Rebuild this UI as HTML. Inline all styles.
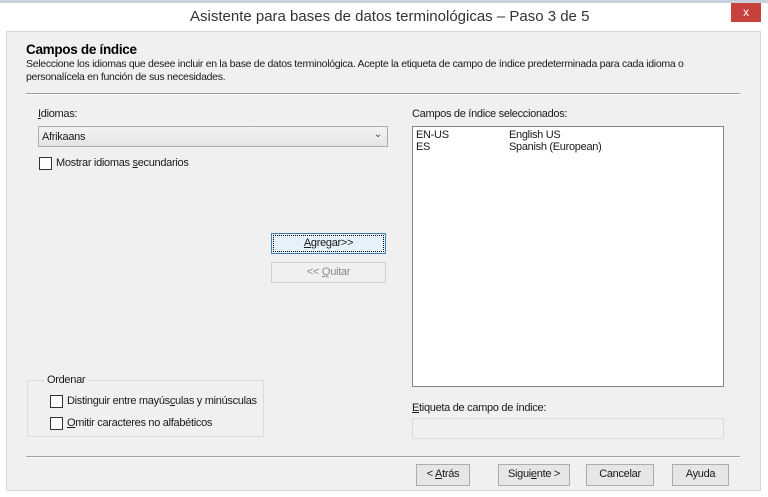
<!DOCTYPE html>
<html><head><meta charset="utf-8"><style>
*{box-sizing:border-box;margin:0;padding:0}
body{width:768px;height:497px;background:#fff;font-family:"Liberation Sans",sans-serif;font-size:11px;color:#1a1a1a;position:relative;overflow:hidden;letter-spacing:-0.3px}
.a{position:absolute;white-space:nowrap}
.top{left:0;top:0;width:768px;height:3px;background:#c9d2dc}
.panel{left:6px;top:31px;width:755px;height:460px;background:#f0f0f0;border:1px solid #d8d8d8}
.btn{position:absolute;background:#e6e6e6;border:1px solid #adadad;text-align:center;line-height:19px;font-size:11px}
.cb{position:absolute;width:13px;height:13px;border:1px solid #333;background:#fff}
.sep{position:absolute;height:2px;border-top:1px solid #a0a0a0;border-bottom:1px solid #fff}
u{text-decoration:underline}
</style></head><body>
<div class="a top"></div>
<div class="a" style="left:0;top:3px;width:768px;height:28px;background:#fff"></div>
<div class="a" style="left:190px;top:8px;font-size:15px;color:#333;letter-spacing:0">Asistente para bases de datos terminológicas – Paso 3 de 5</div>
<div class="a" style="left:731px;top:3px;width:30px;height:19px;background:#c7423c;color:#fff;text-align:center;font-size:12px;line-height:18px">x</div>
<div class="a panel"></div>
<div class="a" style="left:26px;top:42px;font-size:13.5px;font-weight:bold;color:#000">Campos de índice</div>
<div class="a" style="left:26px;top:58px;font-size:10.5px;line-height:13px">Seleccione los idiomas que desee incluir en la base de datos terminológica. Acepte la etiqueta de campo de índice predeterminada para cada idioma o<br>personalícela en función de sus necesidades.</div>
<div class="sep" style="left:26px;top:93px;width:714px"></div>
<div class="a" style="left:38px;top:108px"><u>I</u>diomas:</div>
<div class="a" style="left:38px;top:126px;width:350px;height:21px;border:1px solid #acacac;background:linear-gradient(#f2f2f2,#e5e5e5);padding:4px 3px">Afrikaans<span style="position:absolute;right:5px;top:2px;font-size:10px;color:#444">&#8964;</span></div>
<div class="cb" style="left:39px;top:157px"></div>
<div class="a" style="left:56px;top:157px">Mostrar idiomas <u>s</u>ecundarios</div>
<div class="btn" style="left:271px;top:233px;width:115px;height:21px;border-color:#3c7fb1;background:#e5f1fb;outline:1px dotted #000;outline-offset:-3px"><u>A</u>gregar&gt;&gt;</div>
<div class="btn" style="left:271px;top:262px;width:115px;height:21px;border-color:#cfcfcf;background:#f0f0f0;color:#8a8a8a">&lt;&lt; <u>Q</u>uitar</div>
<div class="a" style="left:412px;top:108px">Campos de índice seleccionados:</div>
<div class="a" style="left:412px;top:126px;width:312px;height:261px;background:#fff;border:1px solid #828790"></div>
<div class="a" style="left:416px;top:129px;line-height:12px">EN-US<br>ES</div>
<div class="a" style="left:509px;top:129px;line-height:12px">English US<br>Spanish (European)</div>
<div class="a" style="left:27px;top:380px;width:237px;height:57px;border:1px solid #dcdcdc"></div>
<div class="a" style="left:44px;top:374px;background:#f0f0f0;padding:0 3px">Ordenar</div>
<div class="cb" style="left:50px;top:395px"></div>
<div class="a" style="left:67px;top:395px">Distinguir entre mayús<u>c</u>ulas y minúsculas</div>
<div class="cb" style="left:50px;top:417px"></div>
<div class="a" style="left:67px;top:417px"><u>O</u>mitir caracteres no alfabéticos</div>
<div class="a" style="left:412px;top:402px"><u>E</u>tiqueta de campo de índice:</div>
<div class="a" style="left:412px;top:418px;width:312px;height:21px;border:1px solid #dadada;background:#f0f0f0"></div>
<div class="sep" style="left:26px;top:456px;width:714px"></div>
<div class="btn" style="left:416px;top:464px;width:54px;height:22px">&lt; <u>A</u>trás</div>
<div class="btn" style="left:498px;top:464px;width:72px;height:22px">Sigui<u>e</u>nte &gt;</div>
<div class="btn" style="left:586px;top:464px;width:68px;height:22px">Cancelar</div>
<div class="btn" style="left:672px;top:464px;width:57px;height:22px">Ayuda</div>
</body></html>
